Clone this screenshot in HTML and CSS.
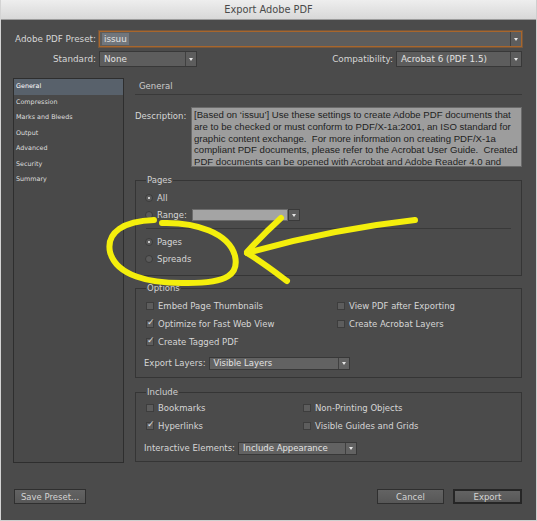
FILE: index.html
```html
<!DOCTYPE html>
<html lang="en">
<head>
    <meta charset="UTF-8">
    <title>Export Adobe PDF</title>
    <link rel="stylesheet" href="styles.css">
</head>
<body>

    <div class="window">
        <div class="titlebar">Export Adobe PDF</div>

        <div class="content">
            <!-- Preset / standard rows -->
            <div class="row row-preset">
                <span class="row-label">Adobe PDF Preset:</span>
                <div class="select select-preset"><span class="value"><span class="picked">issuu</span></span><span class="arrow"></span></div>
            </div>
            <div class="row row-standard">
                <span class="row-label">Standard:</span>
                <div class="select select-standard"><span class="value">None</span><span class="arrow"></span></div>
                <span class="compat-label">Compatibility:</span>
                <div class="select select-compat"><span class="value">Acrobat 6 (PDF 1.5)</span><span class="arrow"></span></div>
            </div>

            <div class="main">
                <ul class="sidebar">
                    <li class="active">General</li>
                    <li>Compression</li>
                    <li>Marks and Bleeds</li>
                    <li>Output</li>
                    <li>Advanced</li>
                    <li>Security</li>
                    <li>Summary</li>
                </ul>

                <div class="panel">
                    <div class="panel-title">General</div>

                    <div class="desc-row">
                        <span class="desc-label">Description:</span>
                        <div class="desc-box">[Based on ‘issuu’] Use these settings to create Adobe PDF documents that are to be checked or must conform to PDF/X-1a:2001, an ISO standard for graphic content exchange.  For more information on creating PDF/X-1a compliant PDF documents, please refer to the Acrobat User Guide.  Created PDF documents can be opened with Acrobat and Adobe Reader 4.0 and</div>
                    </div>

                    <fieldset class="group group-pages">
                        <legend>Pages</legend>
                        <div class="opt"><span class="radio checked"></span>All</div>
                        <div class="opt"><span class="radio"></span>Range:
                            <div class="range-field"><span class="range-input"></span><span class="arrow"></span></div>
                        </div>
                        <div class="divider"></div>
                        <div class="opt"><span class="radio checked"></span>Pages</div>
                        <div class="opt"><span class="radio"></span>Spreads</div>
                    </fieldset>

                    <fieldset class="group group-options">
                        <legend>Options</legend>
                        <div class="checks">
                            <div class="opt"><span class="check"></span>Embed Page Thumbnails</div>
                            <div class="opt"><span class="check"></span>View PDF after Exporting</div>
                            <div class="opt"><span class="check checked"></span>Optimize for Fast Web View</div>
                            <div class="opt"><span class="check"></span>Create Acrobat Layers</div>
                            <div class="opt"><span class="check checked"></span>Create Tagged PDF</div>
                        </div>
                        <div class="field-row">
                            <span>Export Layers:</span>
                            <div class="select small select-layers"><span class="value">Visible Layers</span><span class="arrow"></span></div>
                        </div>
                    </fieldset>

                    <fieldset class="group group-include">
                        <legend>Include</legend>
                        <div class="checks">
                            <div class="opt"><span class="check"></span>Bookmarks</div>
                            <div class="opt"><span class="check"></span>Non-Printing Objects</div>
                            <div class="opt"><span class="check checked"></span>Hyperlinks</div>
                            <div class="opt"><span class="check"></span>Visible Guides and Grids</div>
                        </div>
                        <div class="field-row">
                            <span>Interactive Elements:</span>
                            <div class="select small select-interactive"><span class="value">Include Appearance</span><span class="arrow"></span></div>
                        </div>
                    </fieldset>
                </div>
            </div>

            <div class="footer">
                <button class="btn btn-save">Save Preset...</button>
                <button class="btn btn-cancel">Cancel</button>
                <button class="btn btn-export">Export</button>
            </div>
        </div>

        <!-- yellow marker scribble on top of the screenshot -->
        <svg class="annotation" viewBox="0 0 537 521" width="537" height="521">
            <g fill="none" stroke="#f4ef0c" stroke-width="6" stroke-linecap="round" stroke-linejoin="round">
                <path d="M162,223 C196,222 229,233 235,256 C239,274 228,283 188,283 C148,284 116,275 110,252 C106,232 124,221 154,220"/>
                <path d="M415,220 C360,226 300,238 247,253"/>
                <path d="M247,252 C258,240 270,228 281,218"/>
                <path d="M247,253 C262,262 275,272 287,281"/>
            </g>
        </svg>
    </div>

</body>
</html>
```

FILE: styles.css
```css
body {
    margin: 0;
    background: #ffffff;
    font-family: "DejaVu Sans", sans-serif;
    font-size: 8.5px;
    color: #d6d6d6;
}

.window {
    position: relative;
    width: 537px;
    height: 521px;
    box-sizing: border-box;
    background: #4b4b4b;
    border-left: 1px solid #d4d4d4;
    border-right: 1px solid #cfcfcf;
    border-bottom: 1px solid #cfcfcf;
    overflow: hidden;
}

.titlebar {
    height: 19px;
    line-height: 19px;
    text-align: center;
    background: linear-gradient(to bottom, #eeeeee, #d8d8d8);
    border-bottom: 1px solid #9c9c9c;
    color: #4a4a4a;
    font-size: 9.8px;
}

.content {
    padding: 0 14px 0 12px;
}

/* Top rows */
.row {
    display: flex;
    align-items: center;
    height: 16px;
    font-size: 8.8px;
}

.row-preset { margin-top: 11px; }
.row-standard { margin-top: 4px; }

.row-label {
    width: 83px;
    margin-right: 3px;
    text-align: right;
    white-space: nowrap;
}

.compat-label {
    margin-left: auto;
    margin-right: 3px;
}

.select {
    display: flex;
    height: 16px;
    box-sizing: border-box;
    background: #5d5d5d;
    border: 1px solid #383838;
    color: #e2e2e2;
}

.select .value {
    flex: 1;
    padding-left: 4px;
    display: flex;
    align-items: center;
    white-space: nowrap;
    overflow: hidden;
}

.select .arrow,
.range-field .arrow {
    position: relative;
    width: 10px;
    border-left: 1px solid #404040;
}

.select .arrow::after,
.range-field .arrow::after {
    content: "";
    position: absolute;
    left: 3px;
    top: 50%;
    margin-top: -1px;
    border-left: 2.5px solid transparent;
    border-right: 2.5px solid transparent;
    border-top: 3px solid #e6e6e6;
}

.select-preset {
    flex: 1;
    border-color: #a8662c;
    box-shadow: 0 0 0 1px rgba(168, 102, 44, 0.45);
}

.select-preset .value { padding-left: 2px; }

.picked {
    background: #71767c;
    padding: 0 2px;
    line-height: 12px;
}

.select-standard { width: 98px; }
.select-compat { width: 126px; }

/* Main area */
.main {
    display: flex;
    margin-top: 11px;
    height: 385px;
}

.sidebar {
    list-style: none;
    margin: 0 11px 0 0;
    padding: 0;
    width: 111px;
    box-sizing: border-box;
    border: 1px solid #2e2e2e;
    background: #494949;
    font-size: 6.4px;
    color: #dedede;
}

.sidebar li {
    height: 15.5px;
    line-height: 15.5px;
    padding-left: 2px;
}

.sidebar li.active {
    background: #58616b;
    color: #ffffff;
}

.panel {
    flex: 1;
    display: flex;
    flex-direction: column;
}

.panel-title {
    height: 16px;
    line-height: 16px;
    padding-left: 4px;
    border-bottom: 1px solid #393939;
    color: #cccccc;
}

.desc-row {
    display: flex;
    margin-top: 12px;
}

.desc-label {
    width: 56px;
    padding-top: 4px;
}

.desc-box {
    flex: 1;
    height: 60px;
    box-sizing: border-box;
    padding: 1px 2px 0;
    background: #9d9d9d;
    border: 1px solid #6a6a6a;
    color: #222222;
    font-family: "Liberation Sans", sans-serif;
    font-size: 9.6px;
    line-height: 11.8px;
    white-space: pre-wrap;
    overflow: hidden;
}

/* Group boxes */
.group {
    margin: 0;
    padding: 0 10px;
    border: 1px solid #353535;
}

.group legend {
    padding: 0 1px;
    line-height: 10px;
    color: #d0d0d0;
}

.group-pages { margin-top: 8px; padding-top: 4px; padding-bottom: 8px; }
.group-options { margin-top: 7px; padding-top: 4px; padding-bottom: 7px; }
.group-include { margin-top: 9px; padding-top: 2px; padding-bottom: 6px; }

.opt {
    display: flex;
    align-items: center;
    height: 17px;
    white-space: nowrap;
}

.checks .opt { height: 18px; }

.radio {
    position: relative;
    width: 8px;
    height: 8px;
    box-sizing: border-box;
    margin: 0 4px 0 -1px;
    border-radius: 50%;
    background: #5a5a5a;
    border: 1px solid #3b3b3b;
}

.radio.checked::after {
    content: "";
    position: absolute;
    left: 2px;
    top: 2px;
    width: 2px;
    height: 2px;
    border-radius: 50%;
    background: #f0f0f0;
}

.check {
    position: relative;
    width: 8px;
    height: 8px;
    box-sizing: border-box;
    margin-right: 4px;
    background: #5d5d5d;
    border: 1px solid #3d3d3d;
}

.check.checked::after {
    content: "✓";
    position: absolute;
    left: 0;
    top: -4px;
    font-size: 9px;
    line-height: 10px;
    color: #e2e2e2;
}

.range-field {
    display: flex;
    height: 12px;
    margin-left: 5px;
}

.range-input {
    width: 96px;
    background: #a4a4a4;
    border: 1px solid #6c6c6c;
    box-sizing: border-box;
}

.range-field .arrow {
    background: #5d5d5d;
    border: 1px solid #3a3a3a;
}

.divider {
    margin: 5px 0 4px;
    border-top: 1px solid #393939;
}

.checks {
    display: grid;
}

.group-options .checks { grid-template-columns: 191px 1fr; }
.group-include .checks { grid-template-columns: 157px 1fr; }

.field-row {
    display: flex;
    align-items: center;
    margin-left: -2px;
    height: 14px;
}

.group-options .field-row { margin-top: 5px; }
.group-include .field-row { margin-top: 6px; }

.field-row > span { margin-right: 3px; }

.select.small {
    height: 13px;
    background: #626262;
}

.select-layers { width: 141px; }
.select-interactive { width: 119px; }

/* Footer buttons */
.footer {
    display: flex;
    margin-top: 26px;
    padding-left: 1px;
}

.btn {
    height: 15px;
    padding: 0;
    box-sizing: border-box;
    background: linear-gradient(to bottom, #636363, #575757);
    border: 1px solid #2f2f2f;
    color: #d4d4d4;
    font-family: "DejaVu Sans", sans-serif;
    font-size: 8.5px;
}

.btn-save { width: 72px; }
.btn-cancel { width: 67px; margin-left: auto; }
.btn-export {
    width: 69px;
    margin-left: 9px;
    border: 2px solid #262626;
}

.annotation {
    position: absolute;
    top: 0;
    left: -1px;
    pointer-events: none;
}
```
